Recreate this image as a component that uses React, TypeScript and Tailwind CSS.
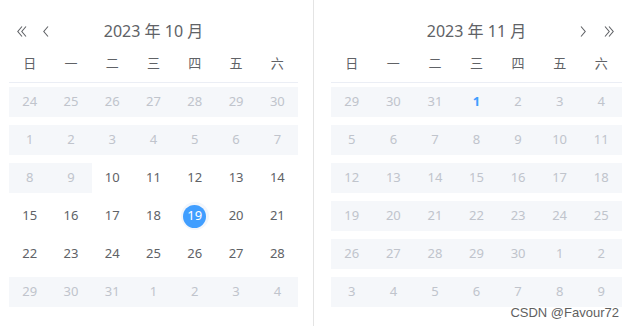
import React from "react";

type Cell = { d: number; off?: boolean; today?: boolean; sel?: boolean };

const week = ["日", "一", "二", "三", "四", "五", "六"];

function build(prev: number[], cur: number[], next: number[], isOff: (d: number) => boolean, today?: number, sel?: number): Cell[] {
  const cells: Cell[] = [];
  prev.forEach((d) => cells.push({ d, off: true }));
  cur.forEach((d) => cells.push({ d, off: isOff(d), today: d === today, sel: d === sel }));
  next.forEach((d) => cells.push({ d, off: true }));
  return cells;
}

const range = (a: number, b: number) => Array.from({ length: b - a + 1 }, (_, i) => a + i);

const oct = build(range(24, 30), range(1, 31), range(1, 4), (d) => d <= 9 || d >= 29, undefined, 19);
const nov = build(range(29, 31), range(1, 30), range(1, 9), () => true, 1);

function Chevron({ dir }: { dir: "l" | "r" }) {
  return (
    <svg width="6" height="11" viewBox="0 0 6 11" fill="none">
      <polyline
        points={dir === "l" ? "5,0.5 0.8,5.5 5,10.5" : "1,0.5 5.2,5.5 1,10.5"}
        stroke="#606266"
        strokeWidth="1.1"
      />
    </svg>
  );
}

function DoubleChevron({ dir }: { dir: "l" | "r" }) {
  return (
    <svg width="10" height="11" viewBox="0 0 10 11" fill="none">
      {dir === "l" ? (
        <>
          <polyline points="5,0.5 0.8,5.5 5,10.5" stroke="#606266" strokeWidth="1.1" />
          <polyline points="9,0.5 4.8,5.5 9,10.5" stroke="#606266" strokeWidth="1.1" />
        </>
      ) : (
        <>
          <polyline points="1,0.5 5.2,5.5 1,10.5" stroke="#606266" strokeWidth="1.1" />
          <polyline points="5,0.5 9.2,5.5 5,10.5" stroke="#606266" strokeWidth="1.1" />
        </>
      )}
    </svg>
  );
}

function Panel({ title, cells, side }: { title: string; cells: Cell[]; side: "l" | "r" }) {
  const rows = Array.from({ length: 6 }, (_, i) => cells.slice(i * 7, i * 7 + 7));
  return (
    <div>
      <div className="grid grid-cols-[70px_1fr_70px] items-center h-[30px] mt-[16px]">
        <div className="flex items-center gap-[16px] pl-[8px]">
          {side === "l" && (
            <>
              <DoubleChevron dir="l" />
              <Chevron dir="l" />
            </>
          )}
        </div>
        <div className="text-center text-[16px] text-[#606266]">{title}</div>
        <div className="flex items-center justify-end gap-[18px] pr-[8px]">
          {side === "r" && (
            <>
              <Chevron dir="r" />
              <DoubleChevron dir="r" />
            </>
          )}
        </div>
      </div>
      <div className="grid grid-cols-7 h-[37px] items-center border-b border-[#ebeef5] text-[13px] text-[#606266]">
        {week.map((w) => (
          <div key={w} className="text-center">{w}</div>
        ))}
      </div>
      <div className="flex flex-col gap-[8px] mt-[4px]">
        {rows.map((r, i) => (
          <div key={i} className="grid grid-cols-7 h-[30px]">
            {r.map((c, j) => (
              <div
                key={j}
                className={`flex items-center justify-center text-[13px] ${c.off ? "bg-[#f5f7fa] text-[#c0c4cc]" : "text-[#606266]"}`}
              >
                {c.sel ? (
                  <span className="w-[28px] h-[28px] rounded-full bg-[#f2f6fc] flex items-center justify-center">
                    <span className="w-[23px] h-[23px] rounded-full bg-[#409eff] text-white flex items-center justify-center">
                      {c.d}
                    </span>
                  </span>
                ) : (
                  <span className={c.today ? "text-[#409eff] font-bold" : ""}>{c.d}</span>
                )}
              </div>
            ))}
          </div>
        ))}
      </div>
    </div>
  );
}

export default function App() {
  return (
    <div
      className="relative w-[634px] h-[326px] bg-white flex overflow-hidden"
      style={{ fontFamily: '"Noto Sans", "Noto Sans CJK SC", sans-serif' }}
    >
      <div className="w-[314px] pl-[9px] pr-[15px] border-r border-[#e4e4e4] h-full">
        <Panel title="2023 年 10 月" cells={oct} side="l" />
      </div>
      <div className="w-[319px] pl-[17px] pr-[11px]">
        <Panel title="2023 年 11 月" cells={nov} side="r" />
      </div>
      <div
        className="absolute right-[15px] bottom-[7px] text-[13px] text-[#5f5f5f] leading-none"
        style={{ fontFamily: '"Liberation Sans", Arial, sans-serif', textShadow: "0 0 2px #fff, 0 0 2px #fff" }}
      >
        CSDN @Favour72
      </div>
    </div>
  );
}
